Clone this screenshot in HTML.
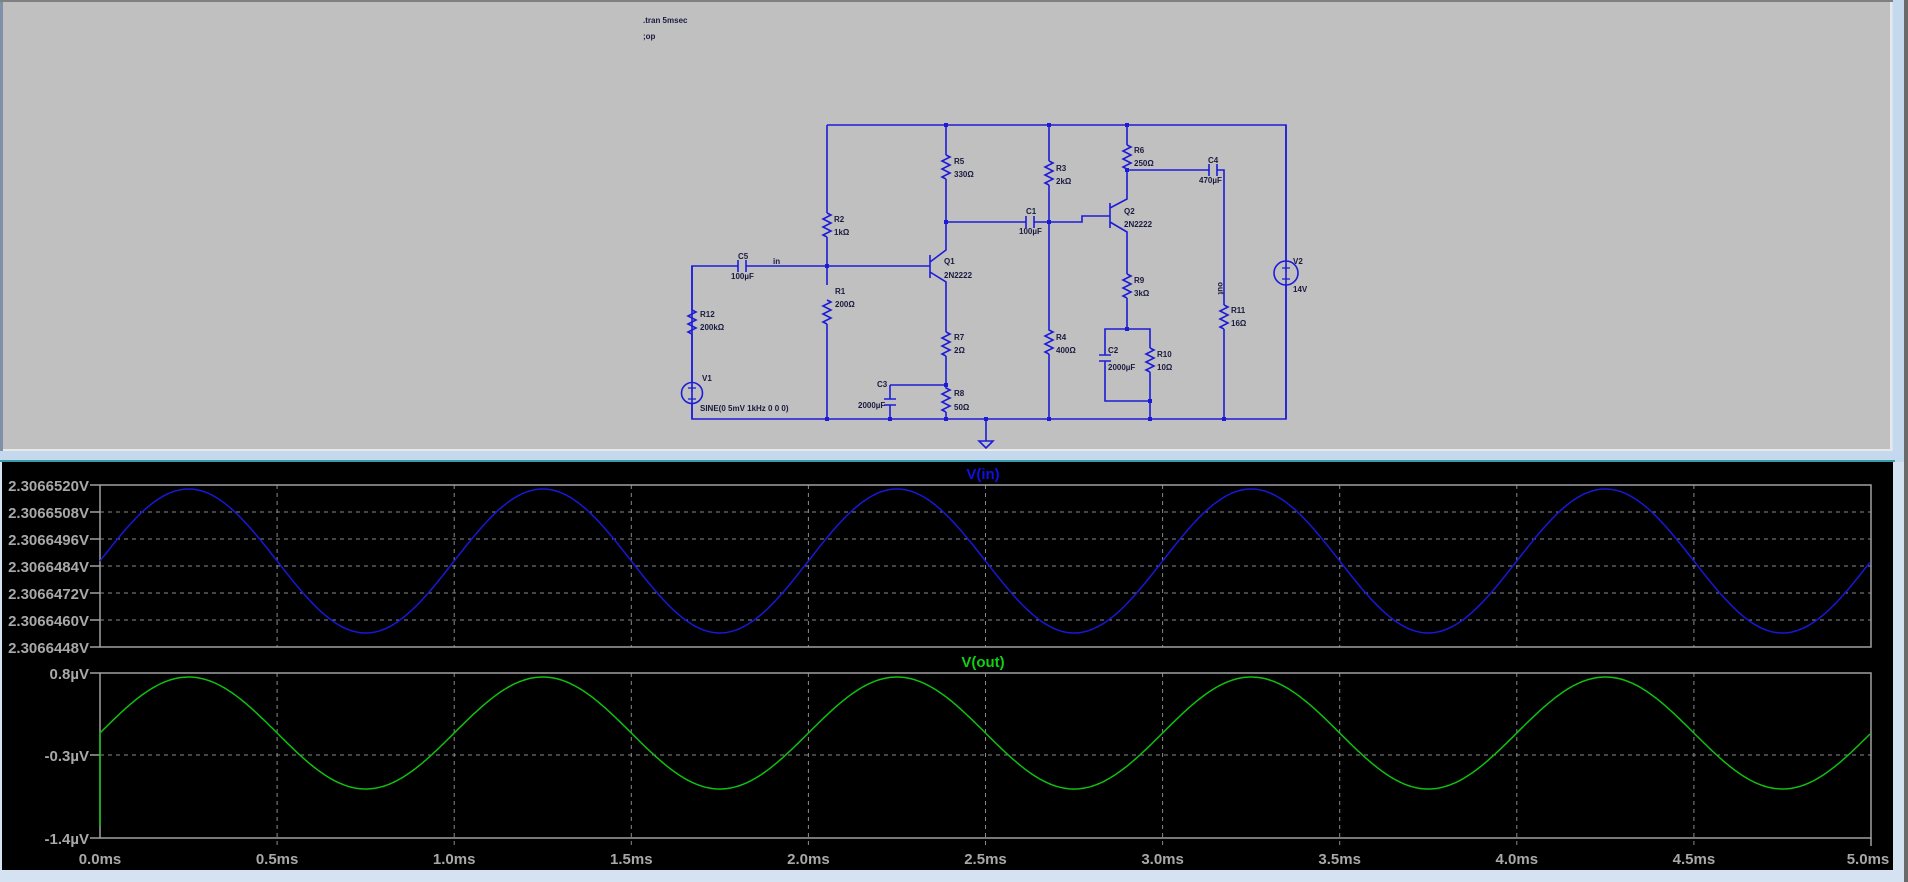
<!DOCTYPE html>
<html><head><meta charset="utf-8"><style>
html,body{margin:0;padding:0;width:1908px;height:882px;overflow:hidden;background:#d4e2f1;}
svg{position:absolute;left:0;top:0;}
.s{font-family:"Liberation Sans",sans-serif;font-size:8px;font-weight:bold;fill:#1a1a40;}
.ax{font-family:"Liberation Sans",sans-serif;font-size:15px;font-weight:bold;fill:#a8a8a8;}
</style></head><body>
<svg width="1908" height="882" viewBox="0 0 1908 882" xmlns="http://www.w3.org/2000/svg">
<rect x="0" y="0" width="1908" height="882" fill="#d4e2f1"/>
<rect x="1904" y="0" width="4" height="882" fill="#6a6a6a"/>
<rect x="1893" y="0" width="11" height="462" fill="#c4d8ee"/>
<rect x="0" y="0" width="3" height="460" fill="#8090a8"/>
<rect x="3" y="0" width="1889" height="451" fill="#c0c0c0"/>
<rect x="0" y="0" width="1893" height="2" fill="#808080"/>
<rect x="3" y="449" width="1889" height="2" fill="#e8e8e8"/>
<rect x="1890" y="2" width="2" height="449" fill="#e8e8e8"/>
<rect x="0" y="451" width="1893" height="10" fill="#c4d8ee"/>
<rect x="0" y="460" width="1895" height="2" fill="#3a9aa8"/>
<rect x="2" y="462" width="1891" height="408" fill="#000"/>
<rect x="1893" y="462" width="11" height="420" fill="#d4e2f1"/>

<g stroke="#1c1cd8" stroke-width="1.6" fill="none">
<path d="M827 125H1286V419H692V266H738M746 266H930"/>
<path d="M827 125V213M827 213l4 2-8 4 8 4-8 4 8 4-8 4 4 2M827 237V266"/>
<path d="M827 266V285M827 300l4 2-8 4 8 4-8 4 8 4-8 4 4 2M827 324V419"/>
<path d="M692 266V310M692 310l4 2-8 4 8 4-8 4 8 4-8 4 4 2M692 334V383M692 403V419"/>
<circle cx="692" cy="393" r="10.5"/>
<path d="M946 125V155M946 155l4 2-8 4 8 4-8 4 8 4-8 4 4 2M946 179V222M946 222H1026M1034 222H1049M1049 222H1082V216H1110"/>
<path d="M930 255V278M930 262L946 250V222M930 272L946 282V332"/>
<path d="M946 332l4 2-8 4 8 4-8 4 8 4-8 4 4 2M946 356V388l4 2-8 4 8 4-8 4 8 4-8 4 4 2M946 412V419"/>
<path d="M890 385H946M890 385V399M890 405V419M884 399H896M884 405H896"/>
<path d="M738 260V272M746 260V272M1026 216V228M1034 216V228"/>
<path d="M1049 125V161M1049 161l4 2-8 4 8 4-8 4 8 4-8 4 4 2M1049 185V330l4 2-8 4 8 4-8 4 8 4-8 4 4 2M1049 354V419"/>
<path d="M1127 125V145M1127 145l4 2-8 4 8 4-8 4 8 4-8 4 4 2M1127 169V199L1110 208M1110 203V228M1110 222L1127 232V274"/>
<path d="M1127 170H1209M1217 170H1224V305M1209 164V176M1217 164V176"/>
<path d="M1224 305l4 2-8 4 8 4-8 4 8 4-8 4 4 2M1224 329V419"/>
<path d="M1127 274l4 2-8 4 8 4-8 4 8 4-8 4 4 2M1127 298V329H1105V355M1105 361V401H1150V419M1127 329H1150V348M1150 348l4 2-8 4 8 4-8 4 8 4-8 4 4 2M1150 372V401M1099 355H1111M1099 361H1111"/>
<path d="M1286 125V261M1286 285V419"/>
<circle cx="1286" cy="273" r="12"/>
<path d="M986 419V441M979 441H993L986 448Z"/>
</g>
<g fill="#1c1cd8">
<rect x="944" y="123" width="4" height="4"/><rect x="1047" y="123" width="4" height="4"/><rect x="1125" y="123" width="4" height="4"/>
<rect x="825" y="264" width="4" height="4"/><rect x="944" y="220" width="4" height="4"/><rect x="1047" y="220" width="4" height="4"/>
<rect x="944" y="383" width="4" height="4"/><rect x="1125" y="168" width="4" height="4"/><rect x="1125" y="327" width="4" height="4"/>
<rect x="1148" y="399" width="4" height="4"/>
<rect x="825" y="417" width="4" height="4"/><rect x="888" y="417" width="4" height="4"/><rect x="944" y="417" width="4" height="4"/>
<rect x="984" y="417" width="4" height="4"/><rect x="1047" y="417" width="4" height="4"/><rect x="1148" y="417" width="4" height="4"/><rect x="1222" y="417" width="4" height="4"/>
</g>
<g stroke="#1c1cd8" stroke-width="1.2"><path d="M688 388H696M692 384V392M688 399H696M1282 268H1290M1286 264V272M1282 279H1290"/></g>
<g class="s">
<text x="643" y="23">.tran 5msec</text><text x="643" y="39">;op</text>
<text x="738" y="259">C5</text><text x="731" y="279">100µF</text><text x="773" y="264">in</text>
<text x="700" y="317">R12</text><text x="700" y="330">200kΩ</text>
<text x="702" y="381">V1</text><text x="700" y="411">SINE(0 5mV 1kHz 0 0 0)</text>
<text x="834" y="222">R2</text><text x="834" y="235">1kΩ</text>
<text x="835" y="294">R1</text><text x="835" y="307">200Ω</text>
<text x="954" y="164">R5</text><text x="954" y="177">330Ω</text>
<text x="944" y="264">Q1</text><text x="944" y="278">2N2222</text>
<text x="954" y="340">R7</text><text x="954" y="353">2Ω</text>
<text x="877" y="387">C3</text><text x="858" y="408">2000µF</text>
<text x="954" y="396">R8</text><text x="954" y="410">50Ω</text>
<text x="1026" y="214">C1</text><text x="1019" y="234">100µF</text>
<text x="1056" y="171">R3</text><text x="1056" y="184">2kΩ</text>
<text x="1056" y="340">R4</text><text x="1056" y="353">400Ω</text>
<text x="1134" y="153">R6</text><text x="1134" y="166">250Ω</text>
<text x="1124" y="214">Q2</text><text x="1124" y="227">2N2222</text>
<text x="1134" y="283">R9</text><text x="1134" y="296">3kΩ</text>
<text x="1108" y="353">C2</text><text x="1108" y="370">2000µF</text>
<text x="1157" y="357">R10</text><text x="1157" y="370">10Ω</text>
<text x="1208" y="163">C4</text><text x="1199" y="183">470µF</text>
<text x="1231" y="313">R11</text><text x="1231" y="326">16Ω</text>
<text x="1293" y="264">V2</text><text x="1293" y="292">14V</text>
<text transform="translate(1218,282) rotate(90)">out</text>
</g>

<g stroke="#8a8a8a" stroke-width="1" stroke-dasharray="4,4" fill="none" id="grid"></g>
<g stroke="#a0a0a0" stroke-width="1.5" fill="none">
<rect x="100" y="485" width="1771" height="162"/>
<rect x="100" y="673" width="1771" height="165"/>
<path d="M90 485H100M90 512H100M90 539H100M90 566H100M90 593H100M90 620H100M90 647H100M90 673H100M90 755H100M90 838H100M1871 838V846"/>
</g>
<g class="ax" text-anchor="end">
<text x="89" y="491">2.3066520V</text><text x="89" y="518">2.3066508V</text><text x="89" y="545">2.3066496V</text>
<text x="89" y="572">2.3066484V</text><text x="89" y="599">2.3066472V</text><text x="89" y="626">2.3066460V</text>
<text x="89" y="653">2.3066448V</text>
<text x="89" y="679">0.8µV</text><text x="89" y="761">-0.3µV</text><text x="89" y="844">-1.4µV</text>
</g>
<g class="ax" text-anchor="middle" id="xl"></g>
<text x="983" y="479" text-anchor="middle" font-family="Liberation Sans,sans-serif" font-size="15" font-weight="bold" fill="#1010e0">V(in)</text>
<text x="983" y="667" text-anchor="middle" font-family="Liberation Sans,sans-serif" font-size="15" font-weight="bold" fill="#10d010">V(out)</text>
<polyline id="blue" fill="none" stroke="#1818d8" stroke-width="1.5"/>
<polyline id="green" fill="none" stroke="#10c010" stroke-width="1.5"/>
</svg>
<script>
var ns="http://www.w3.org/2000/svg",g=document.getElementById("grid"),xl=document.getElementById("xl");
function ln(x1,y1,x2,y2){var l=document.createElementNS(ns,"line");l.setAttribute("x1",x1);l.setAttribute("y1",y1);l.setAttribute("x2",x2);l.setAttribute("y2",y2);g.appendChild(l);}
[512,539,566,593,620].forEach(function(y){ln(100,y,1871,y);});ln(100,755,1871,755);
for(var k=1;k<10;k++){var x=100+k*177.1;ln(x,485,x,647);ln(x,673,x,846);}
for(var k=0;k<=10;k++){var t=document.createElementNS(ns,"text");t.setAttribute("x",k==10?1868:100+k*177.1);t.setAttribute("y",864);t.textContent=(k/2).toFixed(1)+"ms";xl.appendChild(t);}
var b=[],gr=["100,826"];
for(var x=100;x<=1871;x+=2){var p=2*Math.PI*(x-100)/354.2;b.push(x+","+(561-72*Math.sin(p)).toFixed(1));gr.push(x+","+(733-56*Math.sin(p)).toFixed(1));}
document.getElementById("blue").setAttribute("points",b.join(" "));
document.getElementById("green").setAttribute("points",gr.join(" "));
</script>
</body></html>
